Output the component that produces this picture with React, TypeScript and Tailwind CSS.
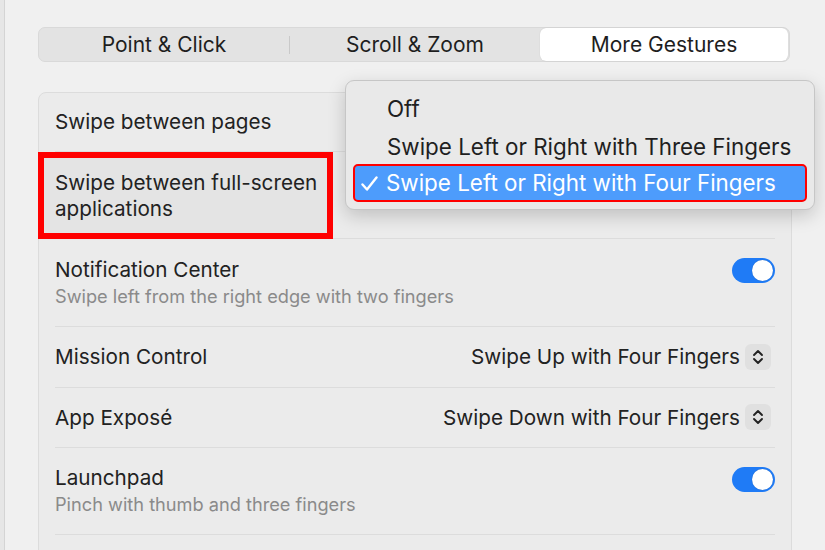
import React from "react";

const FONT = { fontFamily: "Inter, 'Noto Sans', sans-serif" };

function Toggle() {
  return (
    <div className="w-[43px] h-[25px] rounded-full bg-[#1f7bf6] flex items-center justify-end pr-[2px]">
      <div className="w-[21px] h-[21px] rounded-full bg-white shadow-[0_0_1px_rgba(0,0,0,0.3)]" />
    </div>
  );
}

function Stepper() {
  return (
    <div className="w-[26px] h-[26px] rounded-[6px] bg-[#e0e0e0] flex items-center justify-center">
      <svg width="12" height="18" viewBox="0 0 12 18" fill="none" stroke="#222" strokeWidth="1.9" strokeLinecap="round" strokeLinejoin="round">
        <path d="M2 7 L6 3 L10 7" />
        <path d="M2 11 L6 15 L10 11" />
      </svg>
    </div>
  );
}

function Popup({ label }: { label: string }) {
  return (
    <div className="flex items-center gap-[5px] mr-[4px]">
      <span className="text-[20.7px] text-[#222]">{label}</span>
      <Stepper />
    </div>
  );
}

export default function App() {
  return (
    <div className="w-[825px] h-[550px] overflow-hidden bg-[#f0f0f0] flex relative" style={FONT}>
      <div className="w-[5px] h-full bg-[#e6e6e6] border-r border-[#d4d4d4]" />
      <div className="flex-1 pl-[33px] pt-[27px]">
        {/* segmented control */}
        <div className="w-[752px] h-[35px] rounded-[7px] bg-[#e3e3e3] border border-[#d9d9d9] flex items-center text-[21px] text-[#1e1e1e]">
          <div className="w-[250px] text-center">Point &amp; Click</div>
          <div className="w-px h-[18px] bg-[#c9c9c9]" />
          <div className="w-[250px] text-center">Scroll &amp; Zoom</div>
          <div className="flex-1 h-[33px] mr-px bg-white rounded-[6px] flex items-center justify-center shadow-[0_0_1px_rgba(0,0,0,0.2)]">
            More Gestures
          </div>
        </div>

        {/* settings panel */}
        <div className="mt-[30px] w-[754px] h-[500px] rounded-t-[8px] bg-[#ebebeb] border border-[#dcdcdc] text-[20.7px] text-[#222]">
          <div className="h-[59px] mx-[16px] flex items-center border-b border-[#dcdcdc]">
            <span>Swipe between pages</span>
          </div>
          <div className="h-[87px] relative border-b border-[#dcdcdc] mx-[16px]">
            <div className="absolute left-[-17px] top-0 w-[295px] h-[87px] border-[6px] border-[#ff0000] bg-[#e4e4e4] flex flex-col justify-center pl-[11px] leading-[26px]">
              <span>Swipe between full-screen</span>
              <span>applications</span>
            </div>
          </div>
          <div className="h-[88px] mx-[16px] flex items-center justify-between border-b border-[#dcdcdc]">
            <div className="flex flex-col leading-[27px]">
              <span>Notification Center</span>
              <span className="text-[18.2px] text-[#8a8a8a]">Swipe left from the right edge with two fingers</span>
            </div>
            <div className="-mt-[24px]">
              <Toggle />
            </div>
          </div>
          <div className="h-[61px] mx-[16px] flex items-center justify-between border-b border-[#dcdcdc]">
            <span>Mission Control</span>
            <Popup label="Swipe Up with Four Fingers" />
          </div>
          <div className="h-[60px] mx-[16px] flex items-center justify-between border-b border-[#dcdcdc]">
            <span>App Exposé</span>
            <Popup label="Swipe Down with Four Fingers" />
          </div>
          <div className="h-[87px] mx-[16px] flex items-center justify-between border-b border-[#dcdcdc]">
            <div className="flex flex-col leading-[27px]">
              <span>Launchpad</span>
              <span className="text-[18.2px] text-[#8a8a8a]">Pinch with thumb and three fingers</span>
            </div>
            <div className="-mt-[24px]">
              <Toggle />
            </div>
          </div>
        </div>
      </div>

      {/* dropdown menu */}
      <div className="absolute left-[345px] top-[80px] w-[470px] h-[130px] rounded-[9px] bg-[#e9e9e9] border border-[#c6c6c6] shadow-[0_6px_18px_rgba(0,0,0,0.18)] px-[7px] pt-[9px] text-[22.4px] text-[#1f1f1f]">
        <div className="h-[38px] flex items-center pl-[34px]">Off</div>
        <div className="h-[37px] flex items-center pl-[34px]">Swipe Left or Right with Three Fingers</div>
        <div className="h-[38px] -mt-[1px] rounded-[5px] border-[2.5px] border-[#ff0000] bg-[#4d9cfc] text-white flex items-center pl-[6px]">
          <svg className="shrink-0" width="17" height="15" viewBox="0 0 17 15" fill="none" stroke="white" strokeWidth="2.4" strokeLinecap="round" strokeLinejoin="round">
            <path d="M1.5 8.5 L6 13.5 L15.5 1.5" />
          </svg>
          <span className="ml-[8px]">Swipe Left or Right with Four Fingers</span>
        </div>
      </div>
    </div>
  );
}
